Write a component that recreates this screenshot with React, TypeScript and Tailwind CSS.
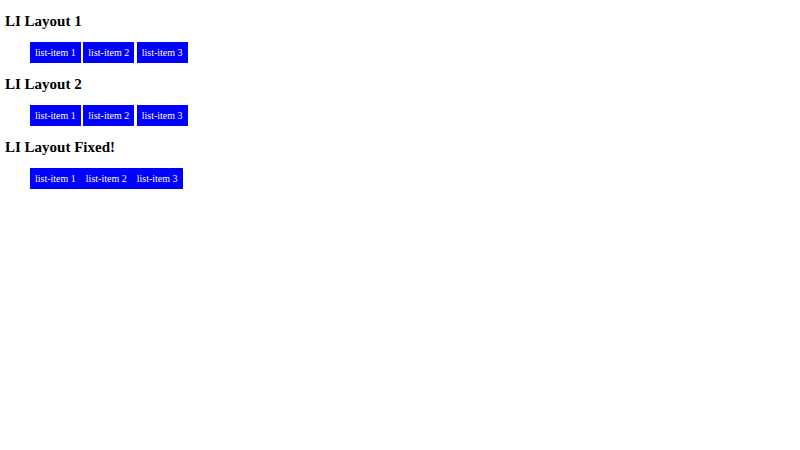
import { Fragment } from "react";

type ListSection = {
  id: number;
  title: string;
  spaced: boolean;
};

const items = ["list-item 1", "list-item 2", "list-item 3"];

const sections: ListSection[] = [
  { id: 1, title: "LI Layout 1", spaced: true },
  { id: 2, title: "LI Layout 2", spaced: true },
  // no whitespace between the items here
  { id: 3, title: "LI Layout Fixed!", spaced: false },
];

function App() {
  return (
    <main className="px-[5px] pt-[13px] bg-white text-black font-['Liberation_Serif',serif]">
      {sections.map((section) => (
        <section key={section.id} className="mb-[13px]">
          <h2 className="text-[15px] leading-[17px] font-bold">
            {section.title}
          </h2>
          <ul className="mt-3 pl-[25px] text-[10px] leading-[11px]">
            {items.map((item) => (
              <Fragment key={item}>
                <li className="inline-block p-[5px] bg-[#0000ff] text-white">
                  {item}
                </li>
                {section.spaced && " "}
              </Fragment>
            ))}
          </ul>
        </section>
      ))}
    </main>
  );
}

export default App;
